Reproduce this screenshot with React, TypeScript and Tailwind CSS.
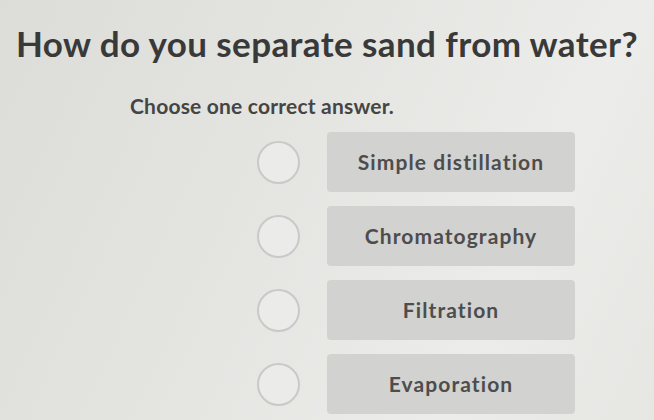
import React from "react";

const options = ["Simple distillation", "Chromatography", "Filtration", "Evaporation"];

export default function App() {
  return (
    <div
      className="w-[654px] h-[420px] overflow-hidden bg-[linear-gradient(115deg,#dcdcd9_0%,#e4e4e1_40%,#ececea_75%,#e6e6e3_100%)] text-[#3d3d3d]"
      style={{ fontFamily: "Lato, 'Open Sans', sans-serif" }}
    >
      <h1 className="pt-[21px] text-center text-[35px] leading-[44px] font-bold tracking-[0.4px] text-[#393939]">
        How do you separate sand from water?
      </h1>
      <p className="mt-[28px] pl-[130px] text-[21px] leading-[26px] font-bold tracking-[0.2px] text-[#454545]">
        Choose one correct answer.
      </p>
      <div className="mt-[13px] flex flex-col gap-[14px] pl-[257px]">
        {options.map((o, i) => (
          <div key={o} className="flex items-center">
            <div className="w-[43px] h-[43px] rounded-full border-2 border-[#c9c9c7] bg-[#ebebea]" />
            <div className="ml-[27px] w-[248px] h-[60px] rounded-[4px] bg-[#d2d2d0] flex items-center justify-center text-[21px] font-bold tracking-[1.1px] text-[#4d4d4d]">
              {o}
            </div>
          </div>
        ))}
      </div>
    </div>
  );
}
